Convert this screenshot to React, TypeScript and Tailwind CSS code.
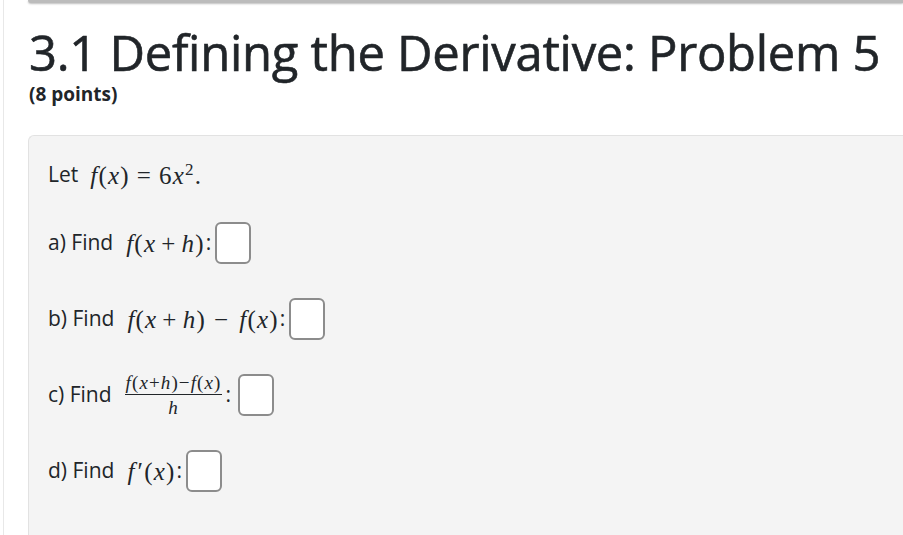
import React from 'react';

const MI: React.FC<{ children: React.ReactNode }> = ({ children }) => (
  <span className="italic">{children}</span>
);

const AnswerBox: React.FC = () => (
  <span className="inline-block h-[42px] w-[36px] shrink-0 rounded-[6px] border-2 border-[#8c8c8c] bg-white" />
);

const Row: React.FC<{ label: string; children: React.ReactNode }> = ({ label, children }) => (
  <div className="flex h-[42px] items-center">
    <span className="mr-[13px]">{label}</span>
    {children}
  </div>
);

export default function App() {
  const math = "font-['Liberation_Serif',serif] text-[25px] leading-none tracking-[1.2px]";

  return (
    <div className="flex h-[535px] w-[903px] overflow-hidden bg-white font-['Open_Sans',sans-serif] text-[#212529]">
      <div className="w-[4px] shrink-0 border-r border-[#e8e8e8]" />

      <div className="flex flex-1 flex-col">
        <div className="ml-[24px] h-[3px] rounded-bl-[3px] bg-[#bcbcbc] shadow-[0_1px_2px_rgba(0,0,0,0.25)]" />

        <h1 className="ml-[25px] mt-[19px] text-[49px] font-medium leading-[60px] tracking-[-0.3px] whitespace-nowrap [-webkit-text-stroke:0.6px_#212529]">
          3.1 Defining the Derivative: Problem 5
        </h1>
        <div className="ml-[25px] text-[19px] font-bold leading-[24px]">(8 points)</div>

        <div className="ml-[24px] mt-[29px] flex flex-1 flex-col rounded-tl-[6px] border-l border-t border-[#e2e2e2] bg-[#f4f4f4] pl-[19px] pt-[18px] text-[21px]">
          <div className="mb-[26px] flex h-[42px] items-center">
            <span className="mr-[12px]">Let</span>
            <span className={math}>
              <MI>f</MI>(<MI>x</MI>)<span className="mx-[7px]">=</span>6<MI>x</MI>
              <sup className="text-[17px]">2</sup>.
            </span>
          </div>

          <div className="flex flex-col gap-[34px]">
            <Row label="a) Find">
              <span className={math}>
                <MI>f</MI>(<MI>x</MI><span className="mx-[5px]">+</span><MI>h</MI>)
              </span>
              <span className="ml-[1px] mr-[4px]">:</span>
              <AnswerBox />
            </Row>

            <Row label="b) Find">
              <span className={math}>
                <MI>f</MI>(<MI>x</MI><span className="mx-[5px]">+</span><MI>h</MI>)<span className="ml-[8px] mr-[10px]">−</span>
                <MI>f</MI>(<MI>x</MI>)
              </span>
              <span className="ml-[1px] mr-[4px]">:</span>
              <AnswerBox />
            </Row>

            <Row label="c) Find">
              <span className="inline-flex flex-col items-center font-['Liberation_Serif',serif] text-[19px] leading-none tracking-[1.1px]">
                <span className="px-[1px] pb-[2px]">
                  <MI>f</MI>(<MI>x</MI>+<MI>h</MI>)−<MI>f</MI>(<MI>x</MI>)
                </span>
                <span className="h-[1px] w-full bg-[#212529]" />
                <span className="pt-[3px]">
                  <MI>h</MI>
                </span>
              </span>
              <span className="ml-[3px] mr-[7px]">:</span>
              <AnswerBox />
            </Row>

            <Row label="d) Find">
              <span className={math}>
                <MI>f</MI><span className="ml-[2px]">′</span>(<MI>x</MI>)
              </span>
              <span className="ml-[1px] mr-[4px]">:</span>
              <AnswerBox />
            </Row>
          </div>
        </div>
      </div>
    </div>
  );
}
